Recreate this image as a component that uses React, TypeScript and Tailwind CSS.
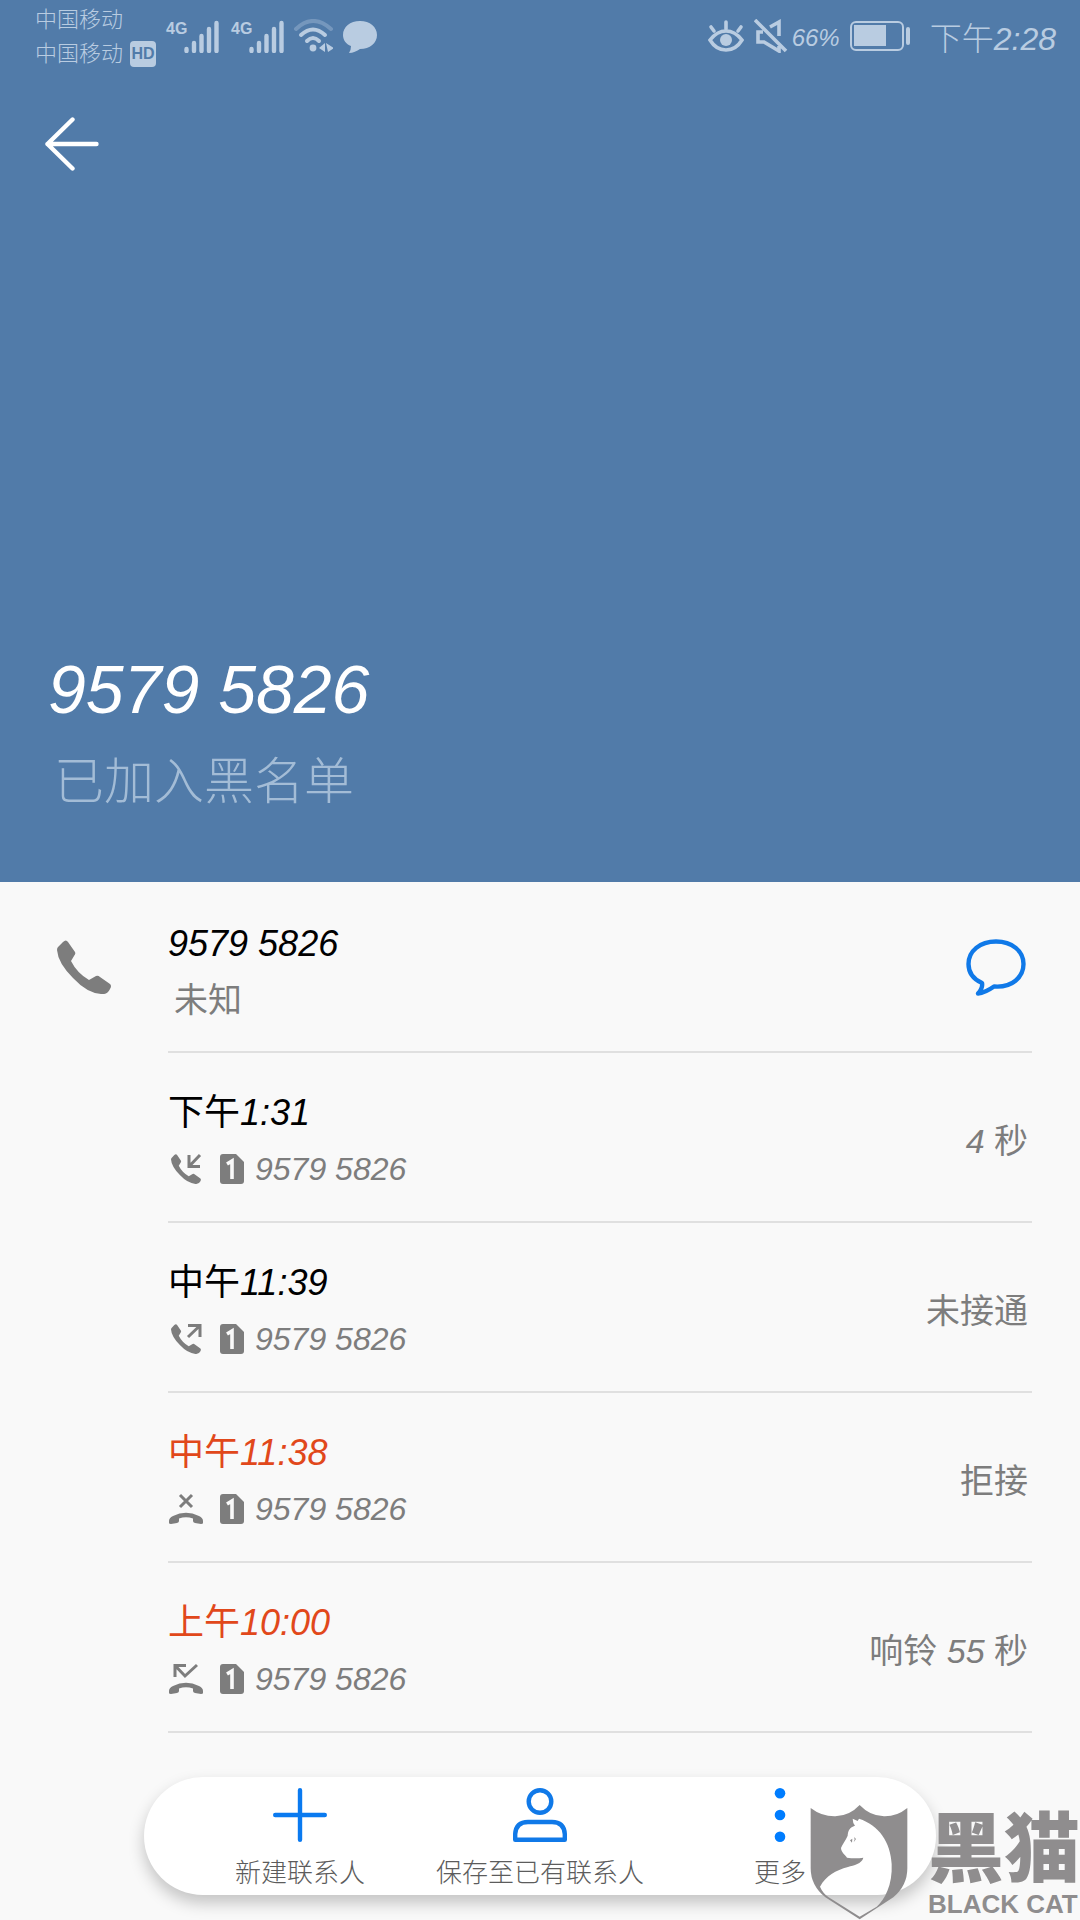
import type { ReactNode } from 'react'

type CallKind = 'incoming' | 'outgoing' | 'rejected' | 'missed'

type Call = {
    period: string
    time: string
    kind: CallKind
    result: ReactNode
}

const phoneNumber = '9579 5826'

const calls: Call[] = [
    { period: '下午', time: '1:31', kind: 'incoming', result: <><i>4</i> 秒</> },
    { period: '中午', time: '11:39', kind: 'outgoing', result: '未接通' },
    { period: '中午', time: '11:38', kind: 'rejected', result: '拒接' },
    { period: '上午', time: '10:00', kind: 'missed', result: <>响铃 <i>55</i> 秒</> },
]

const handset = 'M1 7L6 2Q9 -1 11 2L18 12Q19 14 17 16L14 21Q20 33 32 40L39 36Q41 35 43 37L53 44Q55 46 53 49Q50 55 44 54Q30 53 16 38Q1 23 0 10Q0 8 1 7Z'
const handsetDown = 'M1 27Q1 24 5 22Q18 15.500 31 22Q35 24 35 27V29Q35 30 33 30L27 29Q25 28.500 25 27V24.500Q18 22 11 24.500V27Q11 28.500 9 29L3 30Q1 30 1 29Z'

const callMarks: Record<CallKind, string> = {
    incoming: 'M21 1V12.500H32M32 1L21 12.500',
    outgoing: 'M20 1.500H32V13M32 1.500L20 13',
    rejected: 'M12 1L24 13M24 1L12 13',
    missed: 'M7 13V1.500H18M7 1.500L17 12L29 1',
}

const CallIcon = ({ kind }: { kind: CallKind }) => (
    <svg viewBox="0 0 36 30" className="h-[30px] w-9 overflow-visible">
        {kind === 'incoming' || kind === 'outgoing' ? (
            <path d={handset} transform="translate(3 0) scale(.555)" fill="currentColor" />
        ) : (
            <path d={handsetDown} fill="currentColor" />
        )}
        <path d={callMarks[kind]} fill="none" stroke="currentColor" strokeWidth="3" />
    </svg>
)

const SimIcon = () => (
    <svg viewBox="0 0 24 30" className="h-[30px] w-6">
        <path d="M3 0H16L24 8V27Q24 30 21 30H3Q0 30 0 27V3Q0 0 3 0Z" fill="currentColor" />
        <path d="M7 10L12 7V25" fill="none" stroke="#f9f9f9" strokeWidth="3.600" />
    </svg>
)

const Signal = () => (
    <div className="flex items-start">
        <span className="w-[18px] text-base leading-5 font-bold">4G</span>
        <svg viewBox="0 0 35 34" className="h-[34px] w-[35px]" stroke="currentColor" strokeWidth="4.400" strokeLinecap="round">
            <path d="M2.500 31V33M10 25V33M17.500 18V33M25 11V33M32.500 5V33" transform="translate(0 -1)" />
        </svg>
    </div>
)

const StatusBar = () => (
    <div className="flex items-start justify-between pt-[3px] pr-6 pl-[35px] text-[#b9cce1]">
        <div className="flex items-start">
            <div className="text-[22px] leading-[34px] font-light">
                <p>中国移动</p>
                <div className="flex items-center gap-[7px]">
                    <p>中国移动</p>
                    <span className="flex h-[26px] w-[26px] items-center justify-center rounded bg-[#b9cce1] text-base leading-none font-bold text-[#517ba9]">HD</span>
                </div>
            </div>
            <div className="mt-4 ml-2.5 flex items-start gap-3">
                <Signal />
                <Signal />
            </div>
            <svg viewBox="0 0 39 34" className="mt-4 ml-2.5 h-[34px] w-[39px]" fill="none" stroke="currentColor" strokeWidth="4" strokeLinecap="round">
                <path d="M2 10Q19 -6 37 10" opacity=".35" />
                <path d="M7 16Q19 5 31 16M13 22Q19 16 25 22" />
                <circle cx="19" cy="29" r="3.400" fill="currentColor" stroke="none" />
                <path d="M25 29L31 24V33ZM32 24L40 29L34 33Z" fill="currentColor" stroke="none" />
            </svg>
            <svg viewBox="0 0 34 32" className="mt-[18px] ml-2.5 h-8 w-[34px]" fill="currentColor">
                <path d="M17 0C27 0 34 6 34 14C34 22 27 28 17 28C14 30 10 32 6 32Q8 29 8 25C3 23 0 19 0 14C0 6 7 0 17 0Z" />
            </svg>
        </div>
        <div className="mt-3 flex items-center">
            <svg viewBox="0 0 36 32" className="h-8 w-9" fill="none" stroke="currentColor" strokeWidth="3.600" strokeLinecap="round">
                <path d="M2 20Q9 11 18 11Q27 11 34 20Q28 30 18 30Q8 30 2 20Z" />
                <circle cx="18" cy="20" r="6" fill="currentColor" stroke="none" />
                <path d="M18 2V9M3 7L6 11M33 7L30 11" />
            </svg>
            <svg viewBox="0 0 34 34" className="ml-2.5 h-[34px] w-[34px]" fill="none" stroke="currentColor" strokeWidth="3.600">
                <path d="M1 1L32 32M16 8L25 3V17M9 13H4V23H10L25 32V27" />
            </svg>
            <span className="ml-1 pt-1 text-2xl italic">66%</span>
            <svg viewBox="0 0 61 30" className="ml-2.5 h-[30px] w-[61px]">
                <rect x="1" y="1" width="52" height="28" rx="5" fill="none" stroke="currentColor" strokeWidth="2" />
                <path d="M4 4H36V25H4Z" fill="currentColor" />
                <rect x="56" y="6" width="4" height="18" rx="2" fill="currentColor" />
            </svg>
            <span className="ml-[19px] pt-1.5 text-[32px] leading-9 font-light">下午<i>2:28</i></span>
        </div>
    </div>
)

const CallRow = ({ call }: { call: Call }) => {
    const red = call.kind === 'rejected' || call.kind === 'missed'
    return (
        <li className="flex items-center justify-between border-b-2 border-[#e0e0e0] pt-8 pr-1 pb-6">
            <div>
                <p className={red ? 'text-4xl leading-[56px] text-[#e1481b]' : 'text-4xl leading-[56px] text-black'}>
                    {call.period}<i>{call.time}</i>
                </p>
                <div className="flex items-center text-[32px] leading-[56px]">
                    <CallIcon kind={call.kind} />
                    <span className="ml-4"><SimIcon /></span>
                    <span className="ml-[11px] italic">{phoneNumber}</span>
                </div>
            </div>
            <p className="text-[34px] leading-[56px]">{call.result}</p>
        </li>
    )
}

const BlackCat = () => (
    <div className="pointer-events-none absolute right-0 bottom-0 flex items-end gap-5 text-[#8f8d8e]">
        <svg viewBox="33 45 292 345" className="h-[115px] w-[98px]" fill="currentColor">
            <path
                fillRule="evenodd"
                d="M34 54Q68 80 108 79Q150 78 181 45Q212 78 254 79Q292 80 324 54V235Q324 287 282 322L181 388L78 322Q34 287 34 235Z
                   M160 86Q160 98 167 107C151 112 146 122 145 137C139 151 128 164 125 174C126 188 137 194 143 203Q168 206 192 203C187 222 164 225 146 231C109 241 80 257 62 290Q70 309 88 322L181 380L232 350C256 329 280 285 277 222C274 157 239 105 179 86L175 93Z"
            />
            <path d="M152 151L159 146L158 158ZM164 141L170 147L163 157L166 148Z" />
        </svg>
        <div className="flex flex-col">
            <span className="text-[76px] leading-[76px] font-black">黑猫</span>
            <span className="text-[26px] leading-8 font-bold">BLACK CAT</span>
        </div>
    </div>
)

export default function App() {
    return (
        <div className="relative min-h-screen bg-[#f9f9f9] font-['Liberation_Sans','Noto_Sans_CJK_SC',sans-serif] text-[#7d7d7d]">
            <header className="bg-[#517ba9] pb-[72px]">
                <StatusBar />
                <button type="button" aria-label="返回" className="mt-[46px] ml-[45px] block text-white">
                    <svg viewBox="0 0 54 54" className="h-[54px] w-[54px]" fill="none" stroke="currentColor" strokeWidth="4.400" strokeLinecap="round" strokeLinejoin="round">
                        <path d="M27.500 2.500L2.500 27L27.500 51.500M2.500 27H51.500" />
                    </svg>
                </button>
                <h1 className="mt-[480px] ml-12 text-[68px] leading-[76px] text-white italic">{phoneNumber}</h1>
                <p className="mt-[27px] ml-[54px] text-[50px] leading-[56px] font-light text-[#a3bcd6]">已加入黑名单</p>
            </header>

            <main className="pr-12">
                <div className="flex">
                    <a href="tel:95795826" aria-label="呼叫" className="w-[168px] shrink-0 pt-[58px] pl-[57px]">
                        <svg viewBox="0 0 54 54" className="h-[54px] w-[54px]">
                            <path d={handset} fill="currentColor" />
                        </svg>
                    </a>
                    <div className="flex flex-1 items-center justify-between border-b-2 border-[#e0e0e0] pt-[34px] pr-1.5 pb-[23px]">
                        <div>
                            <p className="text-4xl leading-[56px] text-black italic">{phoneNumber}</p>
                            <p className="pl-1.5 text-[34px] leading-[56px]">未知</p>
                        </div>
                        <button type="button" aria-label="信息" className="-mt-2.5 text-[#1079e8]">
                            <svg viewBox="0 0 60 57" className="h-[57px] w-[60px]" fill="none" stroke="currentColor" strokeWidth="4.400" strokeLinejoin="round">
                                <path d="M30 2.500C46 2.500 57.500 12 57.500 25C57.500 38 46 49 28 47.500C23 51 18 54 12 54.500Q17 49 16 44C7 40 2.500 33 2.500 25C2.500 12 14 2.500 30 2.500Z" />
                            </svg>
                        </button>
                    </div>
                </div>
                <ul className="ml-[168px]">
                    {calls.map((call) => <CallRow key={call.time} call={call} />)}
                </ul>
            </main>

            <div className="px-36 pt-11 pb-[25px]">
                <nav className="grid grid-cols-3 rounded-full bg-white px-9 pt-[11px] pb-1 text-[26px] leading-9 font-light whitespace-nowrap text-[#5c5c5c] shadow-[0_8px_16px_rgba(0,0,0,0.22)]">
                    <button type="button" className="flex flex-col items-center gap-[13px]">
                        <svg viewBox="0 0 54 54" className="h-[54px] w-[54px]" stroke="#0a7af0" strokeWidth="4.400" strokeLinecap="round">
                            <path d="M27 2.200V51.800M2.200 27H51.800" />
                        </svg>
                        新建联系人
                    </button>
                    <button type="button" className="flex flex-col items-center gap-[13px]">
                        <svg viewBox="0 0 54 54" className="h-[54px] w-[54px]" fill="none" stroke="#1079e8" strokeWidth="4.400" strokeLinejoin="round">
                            <circle cx="27" cy="13.500" r="11.300" />
                            <path d="M2.200 51.800V46Q3 34 15 34H39Q51 34 51.800 46V51.800Z" />
                        </svg>
                        保存至已有联系人
                    </button>
                    <button type="button" className="flex flex-col items-center gap-[13px]">
                        <svg viewBox="0 0 54 54" className="h-[54px] w-[54px]" fill="#007dff">
                            <circle cx="27" cy="5.300" r="5.300" />
                            <circle cx="27" cy="27" r="5.300" />
                            <circle cx="27" cy="48.700" r="5.300" />
                        </svg>
                        更多
                    </button>
                </nav>
            </div>
            <BlackCat />
        </div>
    )
}
